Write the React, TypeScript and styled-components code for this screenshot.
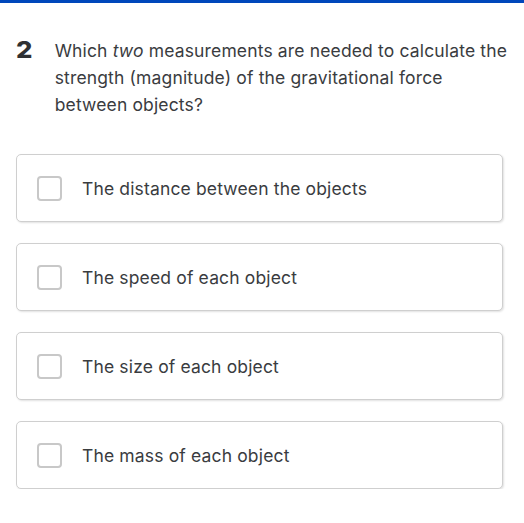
import React from "react";
import styled, { createGlobalStyle } from "styled-components";

const Global = createGlobalStyle`
  html, body { margin: 0; padding: 0; background: #fff; }
  body { font-family: Inter, "DejaVu Sans", sans-serif; color: #333; }
`;

const TopBar = styled.div`
  height: 3px;
  background: #0047bb;
`;

const Page = styled.div`
  padding: 34px 8px 0 16px;
`;

const Question = styled.div`
  display: flex;
  align-items: flex-start;
  gap: 24px;
`;

const Number = styled.div`
  font-family: Inter, sans-serif;
  font-weight: 800;
  font-size: 23px;
  line-height: 26px;
  color: #2f3133;
  width: 18px;
  transform: scaleX(1.12);
  transform-origin: left center;
`;

const Prompt = styled.p`
  margin: 0;
  font-size: 17.5px;
  letter-spacing: 0.15px;
  line-height: 27px;
  color: #3a3c3f;
  em { font-style: italic; }
`;

const Options = styled.div`
  display: flex;
  flex-direction: column;
  gap: 21px;
  margin: 36px 13px 0 0;
`;

const Card = styled.label`
  display: flex;
  align-items: center;
  gap: 20px;
  height: 68px;
  box-sizing: border-box;
  padding: 0 20px;
  border: 1px solid #cfcfcf;
  border-radius: 5px;
  box-shadow: 1px 1px 2px rgba(0, 0, 0, 0.12);
  background: #fff;
`;

const Box = styled.span`
  width: 25px;
  height: 25px;
  box-sizing: border-box;
  border: 2px solid #c8c8c8;
  border-radius: 4px;
  flex: none;
`;

const OptionText = styled.span`
  font-size: 17.5px;
  letter-spacing: 0.15px;
  color: #3a3c3f;
`;

const options = [
  "The distance between the objects",
  "The speed of each object",
  "The size of each object",
  "The mass of each object",
];

export default function App() {
  return (
    <>
      <Global />
      <TopBar />
      <Page>
        <Question>
          <Number>2</Number>
          <Prompt>
            Which <em>two</em> measurements are needed to calculate the
            strength (magnitude) of the gravitational force between objects?
          </Prompt>
        </Question>
        <Options>
          {options.map((o) => (
            <Card key={o}>
              <Box />
              <OptionText>{o}</OptionText>
            </Card>
          ))}
        </Options>
      </Page>
    </>
  );
}
